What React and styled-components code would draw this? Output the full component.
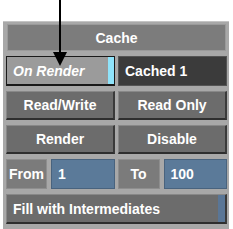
import React from "react";
import styled, { createGlobalStyle, css } from "styled-components";

const Global = createGlobalStyle`
  html, body { margin: 0; padding: 0; background: #ffffff; }
  body { width: 233px; height: 229px; overflow: hidden; font-family: "Liberation Sans", Arial, sans-serif; }
`;

const Page = styled.div`
  position: relative;
  width: 233px;
  height: 229px;
  padding: 21px 4px 0 3px;
  box-sizing: border-box;
`;

const Panel = styled.div`
  background: #a8a8a8;
  border-top: 1px solid #c4c4c4;
  padding: 2px 2px 5px 3px;
  display: flex;
  flex-direction: column;
  gap: 5px;
`;

const Header = styled.div`
  height: 27px;
  margin: 0 1px;
  background: #7c7c7c;
  border: 1px solid #9a9a9a;
  box-sizing: border-box;
  color: #fff;
  font-weight: bold;
  font-size: 14px;
  display: flex;
  align-items: center;
  justify-content: center;
`;

const Row = styled.div`
  display: grid;
  grid-template-columns: ${(p) => (p.single ? "1fr" : "1fr 1fr")};
  gap: 3px;
  height: ${(p) => p.h || 28}px;
`;

const Button = styled.div`
  position: relative;
  background: #6c6c6c;
  border-top: 1px solid #888;
  border-left: 1px solid #888;
  border-right: 2px solid #3a3a3a;
  border-bottom: 2px solid #2e2e2e;
  box-sizing: border-box;
  color: #fff;
  font-weight: bold;
  font-size: 14px;
  display: flex;
  align-items: center;
  justify-content: ${(p) => (p.left ? "flex-start" : "center")};
  padding-left: ${(p) => (p.left ? "6px" : "0")};
  ${(p) =>
    p.active &&
    css`
      background: #9b9b9b;
      border: 1px solid #1a1a1a;
      border-bottom: 2px solid #1a1a1a;
      font-style: italic;
    `}
`;

const Strip = styled.div`
  position: absolute;
  right: 0;
  top: 0;
  bottom: 0;
  width: ${(p) => p.w || 6}px;
  background: ${(p) => p.color};
`;

const Field = styled.div`
  background: ${(p) => p.bg};
  border: 1px solid ${(p) => p.edge};
  box-sizing: border-box;
  color: #fff;
  font-weight: bold;
  font-size: 14px;
  display: flex;
  align-items: center;
  padding-left: 6px;
`;

const RangeRow = styled.div`
  display: grid;
  grid-template-columns: 41px 1fr 41px 1fr;
  column-gap: 4px;
  height: 30px;
  & > :nth-child(3) { margin-left: -1px; }
`;

const Label = styled.div`
  background: #7b7b7b;
  border: 1px solid #8e8e8e;
  box-sizing: border-box;
  color: #fff;
  font-weight: bold;
  font-size: 14px;
  display: flex;
  align-items: center;
  justify-content: center;
`;

const Arrow = styled.svg`
  position: absolute;
  left: 50px;
  top: 0;
`;

export default function App() {
  return (
    <>
      <Global />
      <Page>
        <Panel>
          <Header>Cache</Header>
          <Row h={30}>
            <Button active left>
              On Render
              <Strip color="#8fe3fa" w={6} />
            </Button>
            <Field bg="#3b3b3b" edge="#555">Cached 1</Field>
          </Row>
          <Row h={29}>
            <Button>Read/Write</Button>
            <Button>Read Only</Button>
          </Row>
          <Row h={29}>
            <Button>Render</Button>
            <Button>Disable</Button>
          </Row>
          <RangeRow>
            <Label>From</Label>
            <Field bg="#5b7a99" edge="#49637e">1</Field>
            <Label>To</Label>
            <Field bg="#5b7a99" edge="#49637e">100</Field>
          </RangeRow>
          <Row h={30} single>
            <Button left>
              Fill with Intermediates
              <Strip color="#5a7696" w={7} />
            </Button>
          </Row>
        </Panel>
        <Arrow width="20" height="68" viewBox="0 0 20 68">
          <line x1="10" y1="0" x2="10" y2="54" stroke="#000" strokeWidth="2" />
          <polygon points="3,52 17,52 10,66" fill="#000" />
        </Arrow>
      </Page>
    </>
  );
}
